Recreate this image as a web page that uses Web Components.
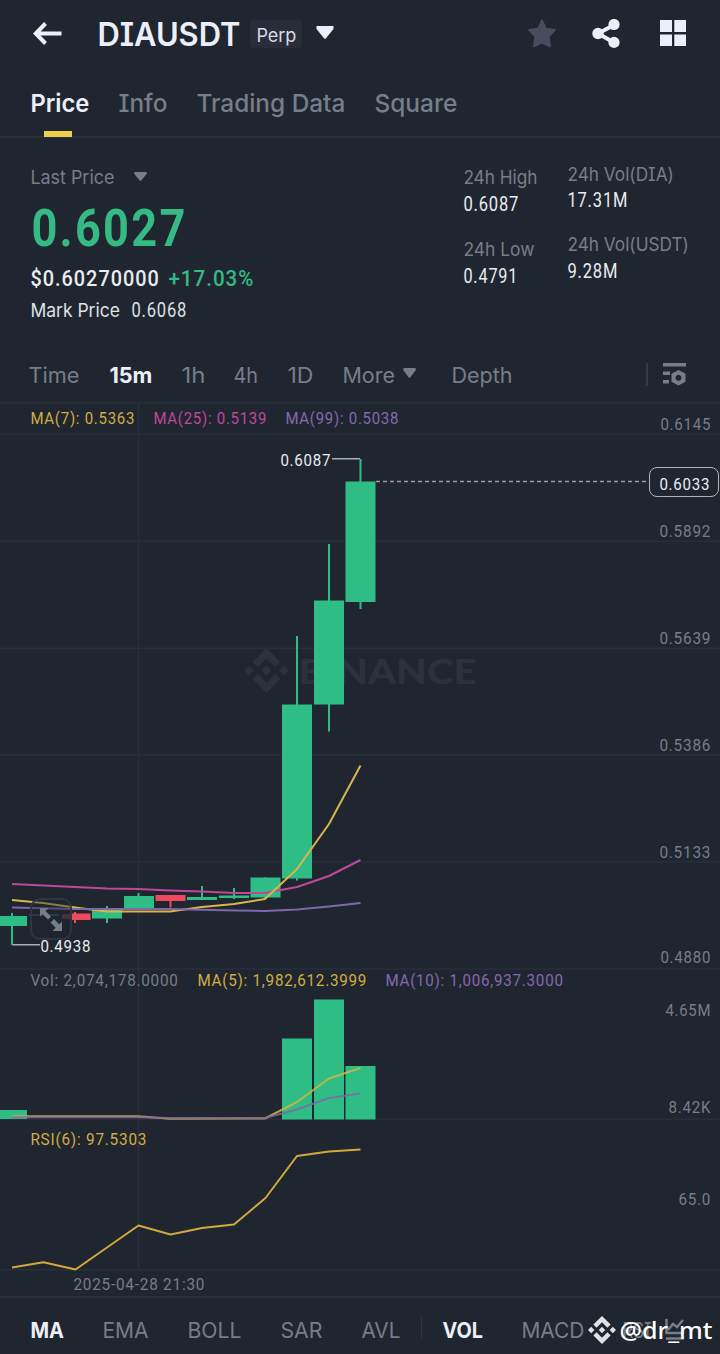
<!DOCTYPE html>
<html lang="en">
<head>
<meta charset="utf-8">
<title>DIAUSDT Perp</title>
<style>
html,body{margin:0;background:#1f262f}
body{width:720px;height:1354px;overflow:hidden;font-family:Inter,"Liberation Sans",sans-serif}
</style>
</head>
<body>
<trade-screen></trade-screen>
<script>
const DIM = '#777d89', WHITE = '#eaecef', GREEN = '#2ebd85', GOLD = '#d2ad43', PINK = '#c0479d', VIOLET = '#8668b0', GRID = '#292f3a';
const define = (name, html, setup) => customElements.define(name, class extends HTMLElement {
  connectedCallback() {
    if (this.shadowRoot) return;
    const t = document.createElement('template');
    t.innerHTML = html;
    this.attachShadow({mode: 'open'}).append(t.content.cloneNode(true));
    if (setup) setup.call(this, this.shadowRoot);
  }
});

/* One line of text, condensed or widened to the width given in w. */
define('fit-text', `<style>
:host{display:block;flex:none;white-space:nowrap;color:${DIM}}
span{display:inline-block;transform-origin:0 50%;white-space:pre}
</style><span><slot></slot></span>`, function (root) {
  const at = n => this.getAttribute(n), s = this.style, span = root.querySelector('span');
  const num = this.hasAttribute('num'), size = +at('size');
  const tracking = num ? size * .05 : 0;
  s.width = at('w') + 'px';
  s.marginLeft = (at('gap') || 0) + 'px';
  s.height = s.lineHeight = (at('lh') || 26) + 'px';
  s.fontSize = size + 'px';
  s.fontWeight = at('weight') || 400;
  s.letterSpacing = tracking + 'px';
  if (at('color')) s.color = at('color');
  s.fontFamily = num ? 'Roboto,"Liberation Sans",sans-serif' : (at('face') || 'Inter') + ',"Liberation Sans",sans-serif';
  if (!num) s.fontFeatureSettings = '"cv08"';
  const natural = span.getBoundingClientRect().width - tracking;
  span.style.transform = `translateX(.4px) scaleX(${(at('w') - 1) / natural})`;
});

define('down-caret', `<style>:host{display:block;flex:none;color:${DIM}}svg{display:block;width:100%;height:100%}</style>
<svg viewBox="0 0 18 13" preserveAspectRatio="none"><path d="M.5 0h17v3L10 12.3q-1 1-2 0L.5 3z" fill="currentColor"/></svg>`);

define('binance-mark', `<style>:host{display:block}svg{display:block;width:100%;height:100%}</style>
<svg viewBox="0 0 126.6 126.6" fill="currentColor"><path d="M38.7 53.2 63.3 28.6 87.9 53.2 102.2 38.9 63.3 0 24.4 38.9zM0 63.3 14.3 49 28.6 63.3 14.3 77.6zM38.7 73.4 63.3 98 87.9 73.4 102.2 87.7 63.3 126.6 24.4 87.7zM98 63.3 112.3 49 126.6 63.3 112.3 77.6zM77.8 63.3 63.3 48.8 48.8 63.3 63.3 77.8z"/></svg>`);

define('top-bar', `<style>
:host{display:flex;align-items:center;height:68px;box-sizing:border-box;padding-left:33px;color:#eceef8}
svg{display:block;flex:none}
.perp{display:flex;align-items:center;justify-content:center;width:52px;height:28px;margin-left:9px;background:#282e39;border-radius:4px}
down-caret{width:18px;height:13px;margin:-3px 0 0 13.500px;color:#eceef8}
</style>
<svg width="29" height="24" viewBox="0 0 29 24" fill="none" stroke="currentColor" stroke-width="4"><path d="M28.500 11.500H3M12.500 1.500 2.800 11.500l9.700 10"/></svg>
<fit-text style="margin-top:2px" gap="35" w="144" size="32.500" weight="600" lh="40" color="#eceef8">DIAUSDT</fit-text>
<div class="perp"><fit-text style="margin-top:1px" w="41" size="18.500" color="#d8dce6">Perp</fit-text></div>
<down-caret></down-caret>
<svg style="margin-left:194.500px" width="28" height="30" viewBox="0 0 28 30"><path d="M14 1.500 17.800 9.800 26.800 11 20.500 17.500 22 27.300 14 23.400 6 27.300 7.500 17.500 1.200 11 10.200 9.800z" fill="#474d5c" stroke="#474d5c" stroke-width="2" stroke-linejoin="round"/></svg>
<svg style="margin-left:36px" width="28" height="30" viewBox="0 0 28 30" fill="currentColor"><path d="M22 6 6 14.500l16 9" fill="none" stroke="currentColor" stroke-width="4"/><circle cx="22" cy="5.500" r="5.600"/><circle cx="6" cy="14.500" r="5.700"/><circle cx="22" cy="23.400" r="5.600"/></svg>
<svg style="margin:-2px 0 0 40px" width="26" height="26" viewBox="0 0 26 26" fill="currentColor"><path d="M0 0h12v12H0zM14.300 0h11.700v12H14.300zM0 14.500h12V26H0zM14.300 14.500h11.700V26H14.300z"/></svg>`);

define('page-tabs', `<style>
:host{display:flex;position:relative;height:70px;box-sizing:border-box;padding:20px 0 0 29.500px;border-bottom:2px solid ${GRID}}
i{position:absolute;left:44px;bottom:-1px;width:28px;height:6.500px;background:#f0d04f}
</style>
<fit-text w="60" size="24.500" weight="600" lh="31" color="#eceef8">Price</fit-text>
<fit-text gap="28" w="50" size="24.500" weight="500" lh="31">Info</fit-text>
<fit-text gap="28" w="150" size="24.500" weight="500" lh="31">Trading Data</fit-text>
<fit-text gap="28" w="84" size="24.500" weight="500" lh="31">Square</fit-text><i></i>`);

define('price-stat', `<style>:host{display:block}</style><slot name="label"></slot><slot></slot>`);

define('price-summary', `<style>
:host{display:flex;height:210px;box-sizing:border-box;padding:26px 0 0 30px}
.main{width:432.500px}.row{display:flex;align-items:center}
down-caret{width:13px;height:9px;margin:-2px 0 0 18.500px}
.a{width:104.500px}.stats{display:grid;row-gap:18px;align-content:start}
.b{margin-top:-3px}
</style>
<div class="main">
<div class="row"><fit-text w="85" size="18.500">Last Price</fit-text><down-caret></down-caret></div>
<fit-text num style="padding:1px 0 0 1px;margin-bottom:-1px" w="155" size="52.500" weight="700" lh="74" color="#36ba85">0.6027</fit-text>
<div class="row"><fit-text num w="129.500" size="22.800" weight="500" lh="29" color="${WHITE}">$0.60270000</fit-text><fit-text num gap="8" w="86" size="22.500" weight="500" lh="29" color="#36ba85">+17.03%</fit-text></div>
<div class="row" style="margin-top:2.500px"><fit-text w="90.500" size="18.500" lh="29" color="#dfe2e8">Mark Price</fit-text><fit-text num gap="10.500" w="56" size="19.500" lh="29" color="#dfe2e8">0.6068</fit-text></div>
</div>
<div class="stats a">
<price-stat><fit-text slot="label" w="75" size="18.500" lh="26">24h High</fit-text><fit-text num w="56" size="19.500" lh="30" color="${WHITE}">0.6087</fit-text></price-stat>
<price-stat><fit-text slot="label" w="72" size="18.500" lh="22">24h Low</fit-text><fit-text num w="55" size="19.500" lh="33" color="${WHITE}">0.4791</fit-text></price-stat>
</div>
<div class="stats b">
<price-stat><fit-text slot="label" w="107.500" size="18.500" lh="26">24h Vol(DIA)</fit-text><fit-text num w="61" size="19.500" lh="28" color="${WHITE}">17.31M</fit-text></price-stat>
<price-stat><fit-text slot="label" w="122.500" size="18.500" lh="22">24h Vol(USDT)</fit-text><fit-text num w="51" size="19.500" lh="34" color="${WHITE}">9.28M</fit-text></price-stat>
</div>`);

define('interval-bar', `<style>
:host{display:flex;align-items:center;height:54px;box-sizing:border-box;padding:0 0 1px 28px}
down-caret{width:13px;height:10px;margin:-3px 0 0 7px}i{width:2px;height:23px;margin-left:133px;background:#343a46}
svg{margin:-1px 0 0 14.500px}
</style>
<fit-text w="52" size="21.500">Time</fit-text>
<fit-text style="margin-top:1px" gap="29" w="44" size="22" weight="700" color="#eceef8">15m</fit-text>
<fit-text gap="28" w="25" size="21.500">1h</fit-text>
<fit-text gap="27" w="25.500" size="21.500">4h</fit-text>
<fit-text gap="28.500" w="27" size="21.500">1D</fit-text>
<fit-text gap="28" w="53.500" size="21.500">More</fit-text><down-caret></down-caret>
<fit-text gap="35.500" w="62" size="21.500">Depth</fit-text><i></i>
<svg width="23" height="23" viewBox="0 0 23 23" fill="${DIM}"><path d="M0 0h23v3.500H0zM0 8.500h7V12H0zM0 17h6v3.500H0z"/><path fill-rule="evenodd" d="m15.500 7 7 3.800v7.900l-7 3.800-7-3.800v-7.900zM15.500 11.700a3 3 0 1 0 .01 0z"/></svg>`);

define('legend-row', `<style>:host{display:flex;position:absolute;left:30px;align-items:center}</style><slot></slot>`);

/* The plot area: page y 402 is the top of the element. */
define('price-chart', `<style>
:host{display:block;position:relative;height:895px}
svg{display:block;position:absolute;inset:0}
.axis{position:absolute;right:9.500px;display:flex;justify-content:flex-end}
binance-mark{position:absolute;left:244px;top:246px;width:45px;height:45px;color:#2c323d}
.word{position:absolute;left:298px;top:249px}
.hi{position:absolute;left:280px;top:44.500px}.lo{position:absolute;left:40px;top:530.500px}
.now{position:absolute;left:649px;top:65px;width:68px;height:26px;border:1.500px solid #aeb3bd;border-radius:8px;background:#1f262f;display:flex;align-items:center;justify-content:center;padding-top:2px}
.now fit-text{margin-top:1px}
.date{position:absolute;left:73px;top:870px}
</style><div id="grid"></div>
<binance-mark></binance-mark><div class="word"><fit-text face="Lato" w="179" size="34" weight="900" lh="40" color="#2c323d">BINANCE</fit-text></div>
<div id="plot"></div>
<legend-row style="top:4px"><fit-text num w="105" size="16.500" color="${GOLD}">MA(7): 0.5363</fit-text><fit-text num gap="18" w="114" size="16.500" color="${PINK}">MA(25): 0.5139</fit-text><fit-text num gap="18" w="114" size="16.500" color="${VIOLET}">MA(99): 0.5038</fit-text></legend-row>
<legend-row style="top:566px"><fit-text num w="148.500" size="16.500">Vol: 2,074,178.0000</fit-text><fit-text num gap="18" w="170" size="16.500" color="${GOLD}">MA(5): 1,982,612.3999</fit-text><fit-text num gap="18" w="178.500" size="16.500" color="${VIOLET}">MA(10): 1,006,937.3000</fit-text></legend-row>
<legend-row style="top:725px"><fit-text num w="117" size="16.500" color="${GOLD}">RSI(6): 97.5303</fit-text></legend-row>
<div class="hi"><fit-text num w="51" size="16.800" color="${WHITE}">0.6087</fit-text></div>
<div class="lo"><fit-text num w="51" size="16.800" color="${WHITE}">0.4938</fit-text></div>
<div class="now"><fit-text num w="51" size="17" color="${WHITE}">0.6033</fit-text></div>
<div class="date"><fit-text num w="132" size="16.500">2025-04-28 21:30</fit-text></div>
<div id="axes"></div>`, function (root) {
  const svg = inner => `<svg width="720" height="895" viewBox="0 402 720 895" fill="none">${inner}</svg>`;
  const rect = (x, y, w, h, c) => `<rect x="${x}" y="${y}" width="${w}" height="${h}" fill="${c}"/>`;
  const line = (pts, c, extra = '') => `<polyline points="${pts}" stroke="${c}" stroke-width="2" stroke-linejoin="round" ${extra}/>`;
  root.getElementById('grid').innerHTML = svg(
    [401.500, 433.500, 540.500, 647.500, 754, 861.2, 968.200, 1118.500, 1269].map((y, i) => rect(0, y, 720, i ? 1.6 : 2, GRID)).join('') + rect(137.800, 403, 1.5, 867, '#2a303b'));
  const RED = '#f0485f';
  // [x, body top, body bottom, wick x, wick top, wick bottom, colour]
  const candles = [
    [0, 916, 926, 12, 913, 945, GREEN],
    [71, 913.500, 920, 75, 912, 923, RED], [92, 910, 918.500, 107, 906, 923, GREEN],
    [124, 896, 908, 138.500, 893, 908, GREEN], [155.500, 895, 901, 170.500, 895, 907.500, RED],
    [187, 897, 900, 202, 886, 900, GREEN], [219, 895.500, 898, 234, 888, 899, GREEN],
    [250.500, 877.500, 897.500, 265, 877.500, 898, GREEN], [282, 704.500, 878.500, 297, 636, 880.500, GREEN],
    [314, 600.500, 704.500, 329, 544, 731.500, GREEN], [345.500, 481.500, 602, 360.500, 459, 609, GREEN]];
  const bars = candles.map(([x, t, b, wx, wt, wb, c]) =>
    rect(x, t, x === 0 ? 27 : x === 71 ? 19.5 : 30, b - t, c) + rect(wx - 1, wt, 2, wb - wt, c)).join('');
  root.getElementById('plot').innerHTML = svg(
    `<path d="M332 458.700H360M12.500 944.700H40" stroke="#a9aeb8" stroke-width="1.500"/><path d="M376 481.500H649" stroke="#959ba6" stroke-width="1.500" stroke-dasharray="4 3"/>` + bars +
    rect(29, 914, 30, 2, '#2f4a48') + rect(62, 914, 9, 5, '#633543') +
    line('12,884 75,887 107,888.5 138,889 170,890.5 202,891.5 234,893 265,893 297,887 329,876 360.5,860', PINK) +
    line('12,900 43,903 75,907.5 107,911.5 170,911.5 202,907 234,904 265,899 297,869 329,824 360.5,765.5', '#d9b64c') +
    line('12,907.5 75,909 170,909 234,910.500 265,911 297,909.5 329,906.5 360.5,903', '#8067aa') +
    `<rect x="31" y="899" width="40" height="40" rx="9" fill="#1f262f" fill-opacity=".4" stroke="#303641" stroke-width="2"/>
     <path d="M40 908h8.500l-3 3 5.500 5.500-3 3-5.500-5.500-2.500 2.500zM62 931h-9.500l3.200-3.200-5.200-5.200 3.500-3.500 5.200 5.200L62 921.500z" fill="#777d87"/>` +
    rect(0, 1110, 27, 9, GREEN) + rect(282, 1038.500, 30, 81, GREEN) + rect(314, 999.500, 30, 120, GREEN) + rect(345.500, 1066, 30, 53.500, GREEN) +
    line('12,1116.3 138,1116.3 170,1118.700 265,1118.5 297,1102 329,1078.5 360.5,1068', '#d2b43f', 'stroke-opacity=".85"') +
    line('12,1117.3 138,1117.3 170,1118 265,1118 297,1109.500 329,1098 360.5,1093.5', '#8067aa', 'stroke-opacity=".8"') +
    line('12,1267.500 43.500,1262.3 75.5,1269.500 138.5,1225.500 170.5,1234.5 202,1228 234,1224.500 265.5,1198 297,1156 329,1151.500 360.5,1149.5', '#d2a93a'));
  root.getElementById('axes').innerHTML = [
    [424.7, '0.6145', 51], [531.5, '0.5892', 52], [638.5, '0.5639', 52], [745.5, '0.5386', 52], [852.5, '0.5133', 52],
    [957.5, '0.4880', 51], [1010.500, '4.65M', 46], [1107.5, '8.42K', 43], [1199.5, '65.0', 33]].map(([y, text, w]) =>
    `<div class="axis" style="top:${y - 415}px"><fit-text num w="${w}" size="16.500">${text}</fit-text></div>`).join('');
});

define('indicator-bar', `<style>
:host{display:flex;position:relative;align-items:center;height:58px;margin-top:-1px;box-sizing:border-box;padding:8px 0 0 30px;border-top:2px solid ${GRID}}
i{width:1.500px;height:21px;margin:-5px 0 0 19.500px;background:#303642}
.chart{margin:-2px 0 0 13px}
.credit{position:absolute;left:588px;top:15.500px;display:flex;align-items:center;color:#dfe1e5}
binance-mark{width:28px;height:28px;margin-top:0}
</style>
<fit-text w="34.500" size="21.500" weight="700" color="#eceef8">MA</fit-text>
<fit-text gap="37.500" w="47" size="21.500">EMA</fit-text>
<fit-text gap="38" w="55" size="21.500">BOLL</fit-text>
<fit-text gap="38" w="43" size="21.500">SAR</fit-text>
<fit-text gap="38" w="40" size="21.500">AVL</fit-text><i></i>
<fit-text gap="20" w="41.500" size="21.500" weight="700" color="#eceef8">VOL</fit-text>
<fit-text gap="37" w="64" size="21.500">MACD</fit-text>
<fit-text gap="37" w="30" size="21.500">RSI</fit-text>
<svg class="chart" width="20" height="22" viewBox="0 0 20 22" fill="none" stroke="${DIM}" stroke-width="2.500"><path d="M1.500 1v14H19M3 12l5-6 4 3 6-7M1 20.500h18"/></svg>
<div class="credit"><binance-mark></binance-mark><fit-text face="'Noto Sans'" gap="3" w="94" size="24" weight="500" lh="32" color="#fff">@dr_mt</fit-text></div>`);

define('trade-screen', `<style>:host{display:flex;flex-direction:column;width:720px;height:1354px;background:#1f262f}</style>
<top-bar></top-bar><page-tabs></page-tabs><price-summary></price-summary><interval-bar></interval-bar><price-chart></price-chart><indicator-bar></indicator-bar>`);
</script>
</body>
</html>
